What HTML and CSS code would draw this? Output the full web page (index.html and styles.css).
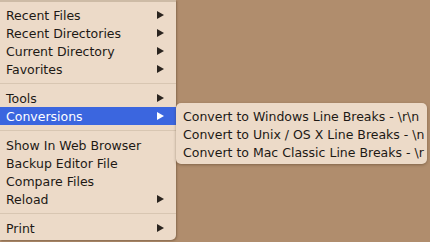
FILE: index.html
```html
<!DOCTYPE html>
<html lang="en">

<head>
    <meta charset="UTF-8">
    <title>Menu</title>
    <link rel="stylesheet" href="styles.css">
</head>

<body>
    <div class="menu">
        <ul>
            <li class="item">Recent Files<span class="arrow"></span></li>
            <li class="item">Recent Directories<span class="arrow"></span></li>
            <li class="item">Current Directory<span class="arrow"></span></li>
            <li class="item">Favorites<span class="arrow"></span></li>
            <li class="separator"></li>
            <li class="item">Tools<span class="arrow"></span></li>
            <li class="item active">Conversions<span class="arrow"></span>
                <ul class="submenu">
                    <li class="item">Convert to Windows Line Breaks - \r\n</li>
                    <li class="item">Convert to Unix / OS X Line Breaks - \n</li>
                    <li class="item">Convert to Mac Classic Line Breaks - \r</li>
                </ul>
            </li>
            <li class="separator"></li>
            <li class="item">Show In Web Browser</li>
            <li class="item">Backup Editor File</li>
            <li class="item">Compare Files</li>
            <li class="item">Reload<span class="arrow"></span></li>
            <li class="separator"></li>
            <li class="item">Print<span class="arrow"></span></li>
        </ul>
    </div>
</body>

</html>
```

FILE: styles.css
```css
* {
    box-sizing: border-box;
}

body {
    margin: 0;
    padding: 0;
    width: 430px;
    height: 242px;
    overflow: hidden;
    background-color: #b08d6d;
    font-family: "DejaVu Sans", sans-serif;
    font-size: 12.5px;
    color: #1d1915;
}

ul {
    list-style: none;
    padding: 0;
    margin: 0;
}

.menu {
    width: 176px;
    background-color: #ecdac8;
    border-top: 2px solid #cdbba6;
    border-bottom-right-radius: 5px;
    box-shadow: 1px 1px 2px rgba(60, 40, 20, 0.35);
    padding: 4px 0 3px;
}

.item {
    position: relative;
    display: flex;
    align-items: center;
    height: 18px;
    padding-left: 6px;
    white-space: nowrap;
}

.arrow {
    position: absolute;
    left: 157px;
    top: 5px;
    width: 0;
    height: 0;
    border-top: 4.5px solid transparent;
    border-bottom: 4.5px solid transparent;
    border-left: 7px solid #2a241f;
}

.active {
    background-color: #3b66df;
    color: #fff;
}

.active > .arrow {
    border-left-color: #fff;
}

.separator {
    height: 11px;
    display: flex;
    align-items: center;
}

.separator::after {
    content: "";
    flex: 1;
    height: 1px;
    background-color: #d8c6b2;
}

.submenu {
    position: absolute;
    left: 176px;
    top: -4px;
    width: 251px;
    padding: 4px 0 3px;
    background-color: #ecdac8;
    color: #1d1915;
    border-radius: 5px;
    box-shadow: 0 1px 3px rgba(60, 40, 20, 0.4);
}

.submenu .item {
    padding-left: 7px;
}
```
